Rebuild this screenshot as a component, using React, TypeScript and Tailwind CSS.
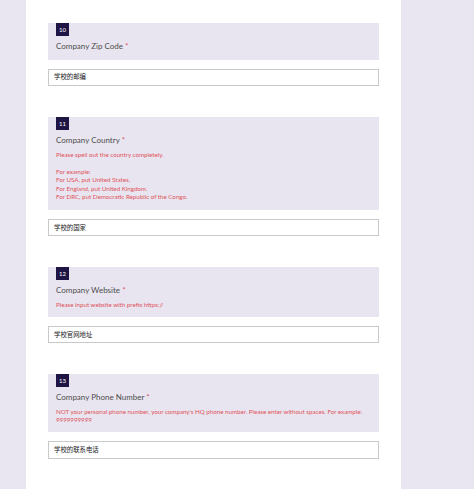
import React from 'react';

interface Question {
  num: number;
  title: string;
  help?: string[];
  placeholder: string;
}

const questions: Question[] = [
  { num: 10, title: 'Company Zip Code', placeholder: '学校的邮编' },
  {
    num: 11,
    title: 'Company Country',
    help: [
      'Please spell out the country completely.',
      '',
      'For example:',
      'For USA, put United States.',
      'For England, put United Kingdom.',
      'For DRC, put Democratic Republic of the Congo.',
    ],
    placeholder: '学校的国家',
  },
  {
    num: 12,
    title: 'Company Website',
    help: ['Please input website with prefix https://'],
    placeholder: '学校官网地址',
  },
  {
    num: 13,
    title: 'Company Phone Number',
    help: [
      "NOT your personal phone number, your company's HQ phone number. Please enter without spaces. For example: 9999999999",
    ],
    placeholder: '学校的联系电话',
  },
];

const font = { fontFamily: 'Lato, "Noto Sans CJK SC", sans-serif' };

function QuestionBlock({ q }: { q: Question }) {
  return (
    <div className="flex flex-col">
      <div className="bg-[#e8e5f0] pl-[8px] pr-[6px] pb-[7.5px]">
        <div className="w-[13px] h-[13px] bg-[#1f1544] text-white text-[6px] leading-[13px] text-center">
          {q.num}
        </div>
        <div className="mt-[4px] text-[8px] leading-[12px] text-[#4d4d4d]">
          {q.title} <span className="text-[#d9545c]">*</span>
        </div>
        {q.help && (
          <div className="mt-[4.5px] text-[6.2px] leading-[8.6px] text-[#e0525a]">
            {q.help.map((line, i) => (
              <div key={i} className="min-h-[8.6px]">
                {line}
              </div>
            ))}
          </div>
        )}
      </div>
      <div className="mt-[9px] h-[17.5px] border border-[#c9c9c9] bg-white pl-[5px] flex items-center text-[6.4px] text-[#222222]">
        {q.placeholder}
      </div>
    </div>
  );
}

export default function App() {
  return (
    <div className="w-[474px] h-[489px] bg-[#e9e6f1] flex overflow-hidden" style={font}>
      <div className="ml-[26px] w-[375px] h-full bg-white pt-[23px] px-[22px] flex flex-col gap-[31px]">
        {questions.map((q) => (
          <QuestionBlock key={q.num} q={q} />
        ))}
      </div>
    </div>
  );
}
